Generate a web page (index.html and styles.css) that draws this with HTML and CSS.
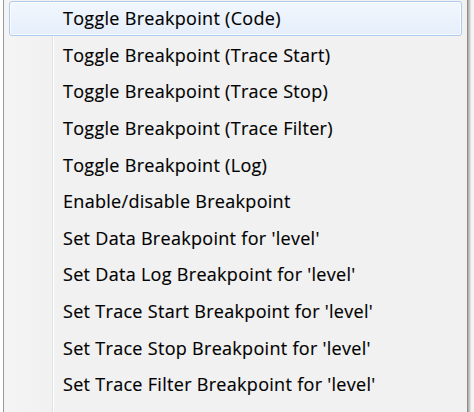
FILE: index.html
```html
<!DOCTYPE html>
<html>
<head>
<meta charset="utf-8">
<link rel="stylesheet" href="styles.css">
</head>
<body>
<div class="screen">
  <div class="app-left"></div>
  <div class="menu">
    <ul class="items">
      <li class="item active">Toggle Breakpoint (Code)</li>
      <li class="item">Toggle Breakpoint (Trace Start)</li>
      <li class="item">Toggle Breakpoint (Trace Stop)</li>
      <li class="item">Toggle Breakpoint (Trace Filter)</li>
      <li class="item">Toggle Breakpoint (Log)</li>
      <li class="item">Enable/disable Breakpoint</li>
      <li class="item">Set Data Breakpoint for 'level'</li>
      <li class="item">Set Data Log Breakpoint for 'level'</li>
      <li class="item">Set Trace Start Breakpoint for 'level'</li>
      <li class="item">Set Trace Stop Breakpoint for 'level'</li>
      <li class="item">Set Trace Filter Breakpoint for 'level'</li>
    </ul>
  </div>
  <div class="shadow"></div>
  <div class="app-right"></div>
</div>
</body>
</html>
```
FILE: styles.css
```css
html, body {
  margin: 0;
  padding: 0;
}
body {
  width: 474px;
  height: 412px;
  overflow: hidden;
  background: #ffffff;
  font-family: "Open Sans", "Noto Sans", sans-serif;
}
.screen {
  display: flex;
  height: 412px;
}
.app-left {
  width: 3px;
  background: #ffffff;
}
.menu {
  flex: 1;
  border-left: 1px solid #9a9a9a;
  border-right: 1px solid #8c8c8c;
  background: linear-gradient(to right, #f4f4f4 0, #f1f1f1 48px, #e1e2e2 48px, #e1e2e2 49px, #ffffff 49px, #ffffff 50px, #f1f1f1 50px);
}
.items {
  list-style: none;
  display: flex;
  flex-direction: column;
  gap: 2px;
  margin: 0;
  padding: 1px 5px 0 5px;
}
.item {
  box-sizing: border-box;
  height: 34.6px;
  padding-left: 53px;
  display: flex;
  align-items: center;
  font-size: 18px;
  letter-spacing: 0.3px;
  color: #000000;
  white-space: nowrap;
  border: 1px solid transparent;
  border-radius: 3px;
  -webkit-text-stroke: 0.15px #000000;
}
.item.active {
  border-color: #aecbee;
  background: linear-gradient(#f2f7fe, #e5eefa);
  box-shadow: inset 0 0 0 1px rgba(255, 255, 255, 0.7);
}
.shadow {
  width: 3px;
  background: linear-gradient(to right, #a5a5a5, #c9c9c9, #e6e6e6);
}
.app-right {
  width: 3px;
  background: #f4f4f4;
}
```
